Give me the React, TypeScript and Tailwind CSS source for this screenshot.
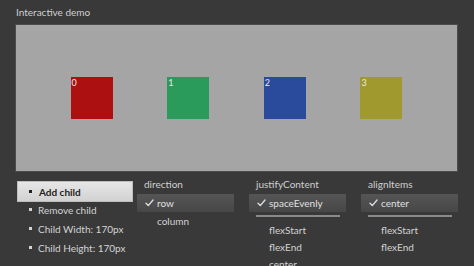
import React from "react";

const squares = [
  { n: "0", c: "bg-[#ac1010]" },
  { n: "1", c: "bg-[#2b9b5b]" },
  { n: "2", c: "bg-[#2a4b9b]" },
  { n: "3", c: "bg-[#a09a2e]" },
];

function Check() {
  return (
    <svg width="9" height="8" viewBox="0 0 9 8" className="shrink-0">
      <path d="M1 4.3 L3.3 6.6 L8 1" fill="none" stroke="#dcdcdc" strokeWidth="1.4" strokeLinecap="round" strokeLinejoin="round" />
    </svg>
  );
}

function Selected({ label }: { label: string }) {
  return (
    <div className="h-[18px] w-[97px] flex items-center pl-[8px] gap-[3px] bg-gradient-to-b from-[#555555] to-[#474747] text-[#e0e0e0]">
      <Check />
      <span>{label}</span>
    </div>
  );
}

function Opt({ label }: { label: string }) {
  return <div className="h-[17px] flex items-center pl-[20px] text-[#d2d2d2]">{label}</div>;
}

function Column({ title, selected, options, sep }: { title: string; selected: string; options: string[]; sep?: boolean }) {
  return (
    <div className="w-[97px] flex flex-col">
      <div className="h-[18px] flex items-center pl-[7px] text-[#d0d0d0]">{title}</div>
      <div className="mt-[1px]">
        <Selected label={selected} />
      </div>
      {sep ? (
        <div className="flex flex-col">
          <div className="mt-[3px] ml-[7px] w-[84px] h-[2px] bg-[#8a8a8a]" />
          <div className="mt-[4px] flex flex-col">
            {options.map((o) => (
              <Opt key={o} label={o} />
            ))}
          </div>
        </div>
      ) : (
        <div className="flex flex-col">
          {options.map((o) => (
            <Opt key={o} label={o} />
          ))}
        </div>
      )}
    </div>
  );
}

function MenuItem({ label }: { label: string }) {
  return (
    <div className="h-[19px] flex items-center pl-[12px] text-[#d4d4d4]">
      <span className="w-[3px] h-[3px] bg-[#d4d4d4] mr-[6px]" />
      <span>{label}</span>
    </div>
  );
}

export default function App() {
  return (
    <div
      className="w-[474px] h-[266px] overflow-hidden bg-[#393939] text-[10px] leading-none"
      style={{ fontFamily: "Lato, 'Open Sans', sans-serif" }}
    >
      <div className="h-[24px] pl-[16px] flex items-center text-[#d0d0d0] text-[10px] pb-[1px]">Interactive demo</div>
      <div className="ml-[15px] w-[443px] h-[148px] bg-[#a5a5a5] border border-[#4c4c4c] flex items-center justify-evenly">
        {squares.map((s) => (
          <div key={s.n} className={`w-[42px] h-[42px] ${s.c} relative`}>
            <span className="absolute left-[1px] top-[1px] text-[9px] text-[#e8e8e8]">{s.n}</span>
          </div>
        ))}
      </div>
      <div className="flex pt-[3px]">
        <div className="ml-[17px] w-[116px] flex flex-col pt-[6px]">
          <div className="h-[21px] flex items-center pl-[11px] bg-gradient-to-b from-[#e6e6e6] to-[#d2d2d2] border border-[#bdbdbd] text-[#1e1e1e] font-bold -mb-[2px] relative z-10">
            <span className="w-[3px] h-[3px] bg-[#222] mr-[7px]" />
            <span>Add child</span>
          </div>
          <MenuItem label="Remove child" />
          <MenuItem label="Child Width: 170px" />
          <MenuItem label="Child Height: 170px" />
        </div>
        <div className="ml-[4px] flex gap-[15px]">
          <Column title="direction" selected="row" options={["column"]} />
          <Column title="justifyContent" selected="spaceEvenly" options={["flexStart", "flexEnd", "center"]} sep />
          <Column title="alignItems" selected="center" options={["flexStart", "flexEnd"]} sep />
        </div>
      </div>
    </div>
  );
}
